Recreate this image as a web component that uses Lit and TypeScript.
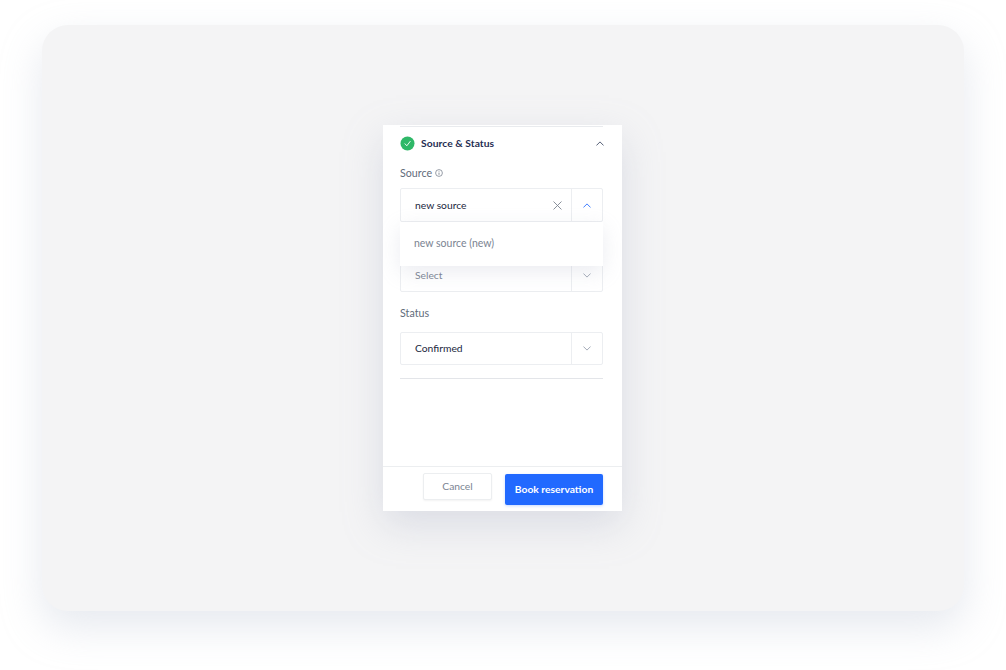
import { LitElement, html, css } from "lit";
import { customElement } from "lit/decorators.js";

const chevDown = html`<svg class="chev" width="8" height="5" viewBox="0 0 8 5" fill="none"><path d="M.7.8 4 4.1 7.3.8" stroke="#9aa2b0" stroke-width=".9" stroke-linecap="round" stroke-linejoin="round"/></svg>`;
const chevUp = (c: string) => html`<svg class="chev" width="8" height="5" viewBox="0 0 8 5" fill="none"><path d="M.7 4.2 4 .9l3.3 3.3" stroke=${c} stroke-width=".85" stroke-linecap="round" stroke-linejoin="round"/></svg>`;

@customElement("app-root")
export class AppRoot extends LitElement {
  static styles = css`
    :host { display: block; width: 1006px; height: 670px; padding: 25px 42px 59px; box-sizing: border-box; background: #fff; font-family: "Lato", "Open Sans", sans-serif; overflow: hidden; }
    .canvas { height: 586px; background: #f4f4f5; border-radius: 26px; box-shadow: 0 16px 40px rgba(190,196,214,.38); display: flex; justify-content: center; padding: 100px 1px 0 0; box-sizing: border-box; }
    .modal { width: 239px; height: 386px; background: #fff; box-shadow: 0 14px 36px rgba(170,176,196,.34); display: flex; flex-direction: column; }
    .body { flex: 1; padding: 1px 19px 0 17px; display: flex; flex-direction: column; }
    .topline { height: 1px; background: #e9ebee; }
    .head { display: flex; align-items: center; gap: 6px; margin-top: 8px; height: 16px; }
    .head .title { flex: 1; font-size: 10.3px; letter-spacing: .05px; font-weight: 700; color: #1f2d52; margin-top: -1px; }
    .head .chev { margin-right: -1px; }
    .check { display: block; margin-top: 1px; }
    .label { font-size: 10.7px; line-height: 14px; color: #5f6b7a; display: flex; align-items: center; gap: 3px; }
    .l1 { margin-top: 15px; }
    .l3 { margin-top: 14px; }
    .field { height: 33px; box-sizing: border-box; border: 1px solid #eceef1; border-radius: 2px; display: flex; align-items: center; font-size: 10.3px; color: #1b2740; }
    .f1 { margin-top: 8px; position: relative; height: 34px; }
    .f2 { margin-top: 37px; color: #7b8492; }
    .f3 { margin-top: 12px; }
    .val { flex: 1; padding-left: 14px; padding-bottom: 1px; }
    .clear { margin-right: 9px; display: block; }
    .arrow { width: 31px; height: 100%; box-sizing: border-box; border-left: 1px solid #eceef1; display: flex; align-items: center; justify-content: center; }
    .menu { position: absolute; left: -1px; right: -1px; top: 33px; height: 44px; background: #fff; box-shadow: 0 6px 20px rgba(170,176,196,.24); display: flex; align-items: center; padding: 0 0 3px 14px; box-sizing: border-box; color: #7b8492; font-size: 10.5px; }
    .div { height: 1px; background: #e3e5e9; margin-top: 13px; }
    .foot { height: 45px; border-top: 1px solid #eceef0; display: flex; gap: 13px; justify-content: flex-end; padding: 6px 19px 0 0; box-sizing: border-box; }
    .btn { font-family: inherit; font-size: 10.3px; border-radius: 2px; box-sizing: border-box; padding: 0 0 2px; }
    .cancel { width: 69px; height: 27px; background: #fff; border: 1px solid #eceef0; color: #7b8492; box-shadow: 0 1px 2px rgba(0,0,0,.05); }
    .book { width: 98px; height: 31px; margin-top: 1px; background: #2169ff; border: 0; color: #fff; font-weight: 700; box-shadow: 0 1px 3px rgba(33,105,255,.25); }
  `;

  render() {
    return html`<div class="canvas"><div class="modal">
      <div class="body">
        <div class="topline"></div>
        <div class="head">
          <svg class="check" width="15" height="15" viewBox="0 0 15 15"><circle cx="7.5" cy="7.5" r="7" fill="#2fb868"/><path d="M5 7.8 6.8 9.8 10.2 5.4" fill="none" stroke="#fff" stroke-width=".9" stroke-linecap="round" stroke-linejoin="round"/></svg>
          <span class="title">Source &amp; Status</span>
          ${chevUp("#3a4560")}
        </div>
        <div class="label l1">Source
          <svg width="8" height="8" viewBox="0 0 8 8" fill="none"><circle cx="4" cy="4" r="3.4" stroke="#6b7482" stroke-width=".7"/><path d="M4 3.6v2.2M4 2.2v.6" stroke="#6b7482" stroke-width=".8"/></svg>
        </div>
        <div class="field f1">
          <span class="val">new source</span>
          <svg class="clear" width="9" height="9" viewBox="0 0 9 9" fill="none"><path d="M.8.8l7.4 7.4M8.2.8.8 8.2" stroke="#7d8590" stroke-width=".9" stroke-linecap="round"/></svg>
          <span class="arrow">${chevUp("#2169ff")}</span>
          <div class="menu">new source (new)</div>
        </div>
        <div class="field f2"><span class="val">Select</span><span class="arrow">${chevDown}</span></div>
        <div class="label l3">Status</div>
        <div class="field f3"><span class="val">Confirmed</span><span class="arrow">${chevDown}</span></div>
        <div class="div"></div>
      </div>
      <div class="foot">
        <button class="btn cancel">Cancel</button>
        <button class="btn book">Book reservation</button>
      </div>
    </div></div>`;
  }
}
